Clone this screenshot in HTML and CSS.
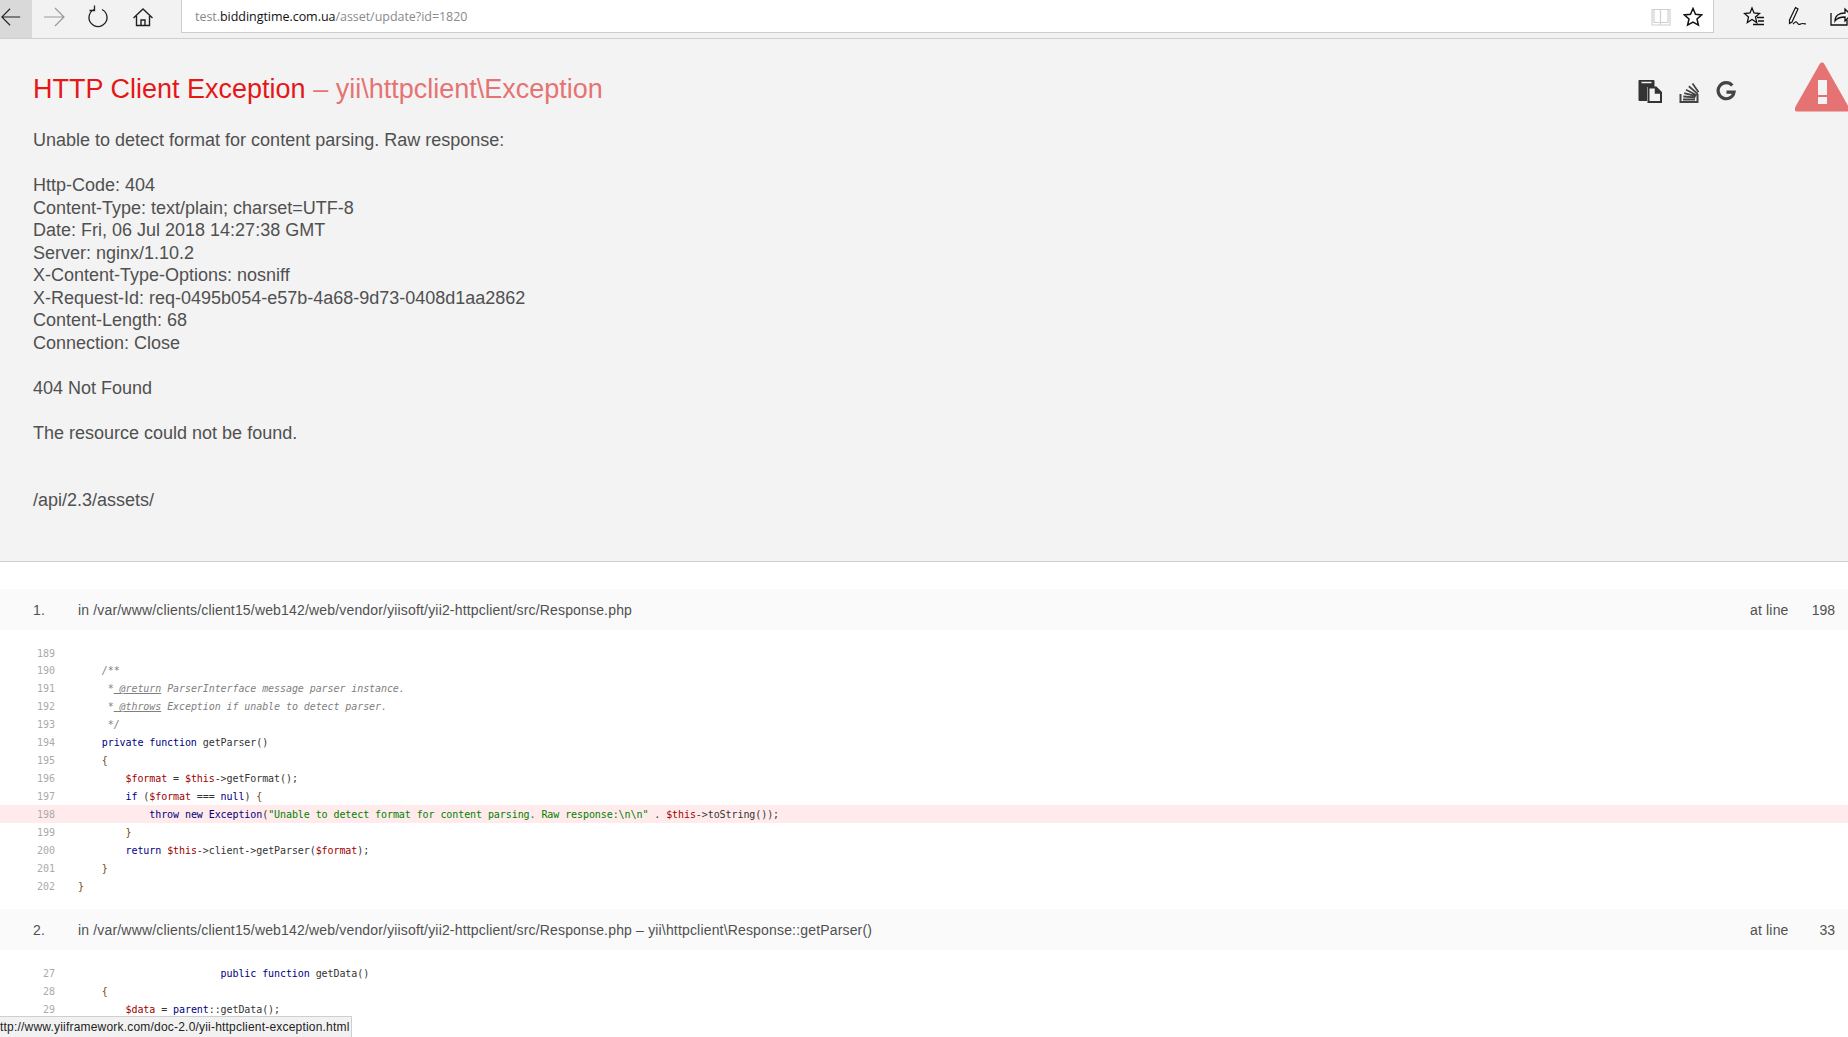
FILE: index.html
```html
<!DOCTYPE html>
<html lang="en">
<head>
<meta charset="utf-8">
<title>HTTP Client Exception</title>
<link rel="stylesheet" href="styles.css">
</head>
<body>
<nav class="toolbar">
  <div class="nav-btn nav-active">
    <svg class="ic" width="24" height="24" viewBox="0 0 24 24"><path d="M22 12H2M11 3l-9 9 9 9" fill="none" stroke="#222" stroke-width="1.2"/></svg>
  </div>
  <div class="nav-btn nav-forward">
    <svg class="ic" width="24" height="24" viewBox="0 0 24 24"><path d="M2 12h20M13 3l9 9-9 9" fill="none" stroke="#999" stroke-width="1.2"/></svg>
  </div>
  <div class="nav-btn nav-refresh">
    <svg class="ic" width="24" height="24" viewBox="0 0 24 24"><path d="M8 4.500a9 9 0 1 0 8 0M8.500 0.500v5h-5" fill="none" stroke="#222" stroke-width="1.300"/></svg>
  </div>
  <div class="nav-btn nav-home">
    <svg class="ic" width="24" height="24" viewBox="0 0 24 24"><path d="M2.500 13L12 4l9.500 9M5.500 11v9.500H10V15h4v5.500h4.500V11M10 20.500h4" fill="none" stroke="#222" stroke-width="1.400"/></svg>
  </div>
  <div class="urlbox">
    <span class="url"><span class="url-dim">test.</span>biddingtime.com.ua<span class="url-dim">/asset/update?id=1820</span></span>
    <svg class="book" width="20" height="20" viewBox="0 0 20 20"><path d="M1 2.500h8.500V18H1zM9.500 2.500H19V18H9.500zM3 2.500V15.500h6.500M17 2.500V15.500H9.500" fill="none" stroke="#d0d0d0" stroke-width="1.200"/></svg>
    <svg class="star" width="20" height="20" viewBox="0 0 20 20"><path d="M10 1.500l2.500 5.800 6.200.6-4.700 4.100 1.400 6.100L10 15l-5.400 3.100L6 12 1.300 7.900l6.200-.6z" fill="none" stroke="#111" stroke-width="1.500"/></svg>
  </div>
  <div class="tools">
    <svg class="tool-fav" width="22" height="22" viewBox="0 0 22 22"><path d="M9 2l2 5 5.500.5-4 3.500 1.200 5.500L9 13.500 4.300 16.500 5.500 11 1.500 7.500 7 7zM14 11.500h7M15 15h6M10 18.500h11" fill="none" stroke="#111" stroke-width="1.300"/></svg>
    <svg class="tool-pen" width="22" height="22" viewBox="0 0 22 22"><path d="M9.500 1.500l2.500 1.500-6 13-2.500 1.500 0-3.500zM7 18c2-2 3-3 4-1.500s2 2.500 3.500 1.500 3-.5 5.500 0" fill="none" stroke="#111" stroke-width="1.200"/></svg>
    <svg class="tool-share" width="22" height="22" viewBox="0 0 22 22"><path d="M2 7v12h16v-5M6 15c0-5 4-8 10-8V3l6 6-6 6v-4c-4 0-8 1-10 4z" fill="none" stroke="#111" stroke-width="1.300"/></svg>
  </div>
</nav>

<header class="header">
  <div class="header-row">
    <h1 class="title"><span class="title-name">HTTP Client Exception</span> <span class="title-class">– yii\httpclient\Exception</span></h1>
    <div class="header-icons">
      <svg width="24" height="24" viewBox="0 0 24 24"><path d="M1 1h14.500a1 1 0 0 1 1 1v6H9v14H1.500a1 1 0 0 1-1-1V2a1 1 0 0 1 .5-1z" fill="#333"/><path d="M3.500 3.500h10" stroke="#f3f3f3" stroke-width="1.500"/><path d="M10.500 8.500H18l5 5V23H10.500z" fill="#f3f3f3" stroke="#333" stroke-width="2"/><path d="M17.500 8.500V14H23" fill="#333" stroke="#333" stroke-width="1.500"/></svg>
      <svg width="20" height="24" viewBox="0 0 20 24"><path d="M1.500 15v8h17v-8" fill="none" stroke="#444" stroke-width="2"/><path d="M4 20.500h12M4.300 17.500l12 .9M5.200 14.200l11.700 3M7 10.800l10.700 5.500M9.800 7.300l9 7.600M13.500 4.500l6 8.500" fill="none" stroke="#444" stroke-width="1.800"/></svg>
      <svg width="20" height="20" viewBox="0 0 20 20"><path d="M16.300 4.600A8 8 0 1 0 18 11.200H10.500" fill="none" stroke="#444" stroke-width="3.200"/></svg>
    </div>
    <svg class="warning" width="54" height="50" viewBox="0 0 54 50"><path d="M27 3L52 47H2z" fill="#e57373" stroke="#e57373" stroke-width="5" stroke-linejoin="round"/><path d="M23 18h9v15h-9zM23 35h9v7h-9z" fill="#f3f3f3"/></svg>
  </div>
  <pre class="message">Unable to detect format for content parsing. Raw response:

Http-Code: 404
Content-Type: text/plain; charset=UTF-8
Date: Fri, 06 Jul 2018 14:27:38 GMT
Server: nginx/1.10.2
X-Content-Type-Options: nosniff
X-Request-Id: req-0495b054-e57b-4a68-9d73-0408d1aa2862
Content-Length: 68
Connection: Close

404 Not Found

The resource could not be found.


/api/2.3/assets/</pre>
</header>

<main class="stack">
  <section class="frame">
    <div class="frame-head">
      <span class="frame-num">1.</span>
      <span class="frame-path">in /var/www/clients/client15/web142/web/vendor/yiisoft/yii2-httpclient/src/Response.php</span>
      <span class="frame-at">at line</span>
      <span class="frame-line">198</span>
    </div>
    <div class="code">
      <div class="line line-first"><span class="ln">189</span><pre class="src"> </pre></div>
      <div class="line"><span class="ln">190</span><pre class="src">    <span class="c">/**</span></pre></div>
      <div class="line"><span class="ln">191</span><pre class="src">     <span class="c">*<u> @return</u> ParserInterface message parser instance.</span></pre></div>
      <div class="line"><span class="ln">192</span><pre class="src">     <span class="c">*<u> @throws</u> Exception if unable to detect parser.</span></pre></div>
      <div class="line"><span class="ln">193</span><pre class="src">     <span class="c">*/</span></pre></div>
      <div class="line"><span class="ln">194</span><pre class="src">    <span class="k">private function</span> getParser()</pre></div>
      <div class="line"><span class="ln">195</span><pre class="src">    <span class="b">{</span></pre></div>
      <div class="line"><span class="ln">196</span><pre class="src">        <span class="v">$format</span> = <span class="v">$this</span>-&gt;getFormat();</pre></div>
      <div class="line"><span class="ln">197</span><pre class="src">        <span class="k">if</span> (<span class="v">$format</span> === <span class="k">null</span>) <span class="b">{</span></pre></div>
      <div class="line line-error"><span class="ln">198</span><pre class="src">            <span class="k">throw new Exception</span>(<span class="s">"Unable to detect format for content parsing. Raw response:\n\n"</span> . <span class="v">$this</span>-&gt;toString());</pre></div>
      <div class="line"><span class="ln">199</span><pre class="src">        <span class="b">}</span></pre></div>
      <div class="line"><span class="ln">200</span><pre class="src">        <span class="k">return</span> <span class="v">$this</span>-&gt;client-&gt;getParser(<span class="v">$format</span>);</pre></div>
      <div class="line"><span class="ln">201</span><pre class="src">    <span class="b">}</span></pre></div>
      <div class="line"><span class="ln">202</span><pre class="src"><span class="b">}</span></pre></div>
    </div>
  </section>
  <section class="frame">
    <div class="frame-head">
      <span class="frame-num">2.</span>
      <span class="frame-path">in /var/www/clients/client15/web142/web/vendor/yiisoft/yii2-httpclient/src/Response.php – yii\httpclient\Response::getParser()</span>
      <span class="frame-at">at line</span>
      <span class="frame-line">33</span>
    </div>
    <div class="code code-next">
      <div class="line"><span class="ln">27</span><pre class="src">                        <span class="k">public function</span> getData()</pre></div>
      <div class="line"><span class="ln">28</span><pre class="src">    <span class="b">{</span></pre></div>
      <div class="line"><span class="ln">29</span><pre class="src">        <span class="v">$data</span> = <span class="k">parent</span>::getData();</pre></div>
    </div>
  </section>
</main>

<div class="status">ttp://www.yiiframework.com/doc-2.0/yii-httpclient-exception.html</div>
</body>
</html>
```

FILE: styles.css
```css
html, body {
  margin: 0;
  padding: 0;
  height: 1037px;
  overflow: hidden;
  background: #fff;
  font-family: "Liberation Sans", Arial, sans-serif;
  color: #505050;
}

.toolbar {
  display: flex;
  align-items: flex-start;
  height: 38px;
  background: #f2f2f2;
  border-bottom: 1px solid #cfcfcf;
  overflow: hidden;
}

.nav-btn {
  flex: none;
  display: flex;
  align-items: center;
  justify-content: center;
  height: 34px;
}
.nav-active { width: 32px; height: 38px; background: #d9d9d9; padding: 0 10px 4px 0; box-sizing: border-box; }
.nav-forward { width: 44px; }
.nav-refresh { width: 44px; }
.nav-home { width: 46px; }
.ic { display: block; }

.urlbox {
  flex: none;
  display: flex;
  align-items: center;
  box-sizing: border-box;
  margin-left: 15px;
  width: 1533px;
  height: 33px;
  background: #fff;
  border-left: 1px solid #cdcdcd;
  border-right: 1px solid #cdcdcd;
  border-bottom: 1px solid #cdcdcd;
  padding: 0 10px 0 13px;
}
.url {
  flex: 1;
  font-family: "Open Sans", sans-serif;
  font-size: 12.5px;
  letter-spacing: -0.04px;
  color: #111;
}
.url-dim { color: #8a8a8a; }
.book { margin: 1px 12px 0 0; }
.star { margin-top: 1px; }

.tools {
  flex: none;
  display: flex;
  align-items: center;
  height: 34px;
  padding-left: 29px;
  gap: 21px;
}

.header {
  background: #f3f3f3;
  border-bottom: 1px solid #cfcfcf;
  padding: 25px 0 49px 33px;
  box-sizing: border-box;
  height: 523px;
}
.header-row {
  display: flex;
  align-items: center;
  height: 50px;
}
.title {
  flex: 1;
  margin: 0;
  font-size: 27px;
  font-weight: 400;
  line-height: 50px;
}
.title-name { color: #e51717; }
.title-class { color: #e57373; }
.header-icons {
  display: flex;
  align-items: center;
  gap: 17px;
  margin-top: 4px;
  margin-right: 59px;
}
.warning { display: block; align-self: flex-start; margin: -2px -1px 0 0; }
.message {
  margin: 15px 0 0;
  font-family: "Liberation Sans", Arial, sans-serif;
  font-size: 18px;
  line-height: 22.5px;
  color: #505050;
}

.stack { padding-top: 27px; }

.frame-head {
  display: flex;
  align-items: center;
  height: 41px;
  background: #fafafa;
  padding: 0 13px 0 33px;
  font-size: 14px;
  letter-spacing: 0.17px;
  color: #505050;
}
.frame-num { width: 45px; }
.frame-path { flex: 1; }
.frame-at { width: 38px; margin-left: 3px; white-space: nowrap; }
.frame-line { width: 47px; text-align: right; letter-spacing: 0; }

.code { padding: 15px 0 14px; }
.code-next { padding-top: 14px; }
.line {
  display: flex;
  height: 18px;
  line-height: 18px;
}
.line-first { height: 16px; }
.line-first .ln { padding-top: 0; }
.line-error { background: #ffebeb; }
.ln {
  width: 55px;
  padding-top: 1px;
  text-align: right;
  font-family: "DejaVu Sans Mono", monospace;
  font-size: 10px;
  color: #aaa;
}
.src {
  margin: 0 0 0 23px;
  padding-top: 1px;
  font-family: "DejaVu Sans Mono", monospace;
  font-size: 10px;
  letter-spacing: -0.08px;
  line-height: 18px;
  color: #333;
}
.c { color: #808080; font-style: italic; }
.k { color: #000080; }
.v { color: #a00000; }
.s { color: #008000; }
.b { color: #7a4a20; }

.status {
  position: absolute;
  left: 0;
  bottom: 0;
  box-sizing: border-box;
  width: 352px;
  height: 21px;
  line-height: 20px;
  background: #f2f2f2;
  border-top: 1px solid #cfcfcf;
  border-right: 1px solid #cfcfcf;
  font-size: 12px;
  letter-spacing: 0.2px;
  color: #222;
  white-space: nowrap;
  overflow: hidden;
}
```
